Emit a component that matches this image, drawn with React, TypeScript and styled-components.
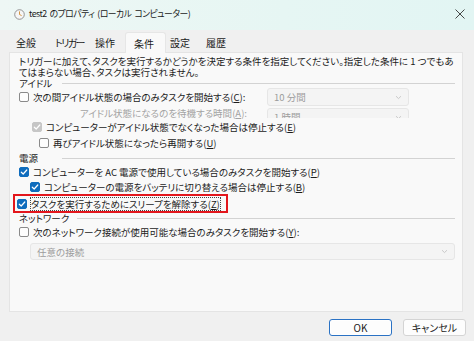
import React from "react";
import styled, { createGlobalStyle } from "styled-components";

const Global = createGlobalStyle`
  html, body { margin: 0; padding: 0; }
  body {
    background: #f0f0f0;
    font-family: "Noto Sans CJK JP", "Noto Sans", sans-serif;
    color: #1b1b1b;
  }
  * { box-sizing: border-box; }
`;

const Window = styled.div`
  width: 474px;
  height: 341px;
  display: flex;
  flex-direction: column;
  background: #f0f0f0;
  overflow: hidden;
  font-feature-settings: "palt";
`;

const TitleBar = styled.div`
  height: 30px;
  flex: none;
  display: flex;
  align-items: center;
  gap: 4px;
  padding: 0 8px 2px 14px;
  background: linear-gradient(90deg, #eef7f5 0%, #e6f6f3 60%, #e2f5f3 100%);
`;

const TitleText = styled.div`
  flex: 1;
  font-size: 8.8px;
  letter-spacing: -0.5px;
  word-spacing: 1.5px;
  line-height: 14px;
  color: #1a1a1a;
  white-space: nowrap;
`;

const CloseBtn = styled.div`
  width: 12px;
  height: 12px;
  display: flex;
  align-items: center;
  justify-content: center;
`;

const TabStrip = styled.div`
  height: 22px;
  flex: none;
  display: flex;
  align-items: flex-end;
  padding-left: 8px;
`;

const Tab = styled.div<{ $active?: boolean; $tight?: boolean }>`
  height: ${(p) => (p.$active ? 21 : 20)}px;
  padding: ${(p) => (p.$active ? "0 11px 0 8px" : p.$tight ? "0 2px 0 10px" : "0 7px")};
  margin: ${(p) => (p.$active ? "0 -4px -1px 2px" : "0")};
  display: flex;
  align-items: center;
  font-size: 10px;
  letter-spacing: ${(p) => (p.$tight ? "-1.6px" : "0")};
  color: #1a1a1a;
  background: ${(p) => (p.$active ? "#f9f9f9" : "transparent")};
  border: 1px solid ${(p) => (p.$active ? "#e6e6e6" : "transparent")};
  border-bottom: none;
  border-radius: 3px 3px 0 0;
  position: relative;
  z-index: ${(p) => (p.$active ? 1 : 0)};
`;

const Panel = styled.div`
  height: 260px;
  flex: none;
  margin: 0 11px 0 9px;
  background: #f9f9f9;
  border: 1px solid #e4e4e4;
  padding: 3px 7px 0 9px;
  display: flex;
  flex-direction: column;
  font-size: 9.5px;
`;

const Intro = styled.div`
  line-height: 11px;
  white-space: nowrap;
`;

const GroupHeading = styled.div<{ $h: number }>`
  height: ${(p) => p.$h}px;
  line-height: ${(p) => p.$h}px;
  display: flex;
  align-items: center;
  gap: 8px;
  white-space: nowrap;
  &::after {
    content: "";
    flex: 1;
    height: 1px;
    background: #d3d3d3;
  }
`;

const HeadingText = styled.span`
  min-width: 35px;
`;

const Row = styled.div<{ $h: number; $indent?: number; $top?: boolean }>`
  height: ${(p) => p.$h}px;
  padding-left: ${(p) => p.$indent ?? 0}px;
  display: flex;
  align-items: ${(p) => (p.$top ? "flex-start" : "center")};
  white-space: nowrap;
`;

const CheckLine = styled.div<{ $w?: number }>`
  display: flex;
  align-items: center;
  gap: 4px;
  width: ${(p) => (p.$w ? `${p.$w}px` : "auto")};
  flex: none;
`;

const Box = styled.span<{ $checked?: boolean; $disabled?: boolean }>`
  width: 10px;
  height: 10px;
  flex: none;
  border-radius: 2px;
  display: inline-flex;
  align-items: center;
  justify-content: center;
  background: ${(p) =>
    p.$checked ? (p.$disabled ? "#c6c6c6" : "#0f6cbd") : "#fdfdfd"};
  border: 1px solid
    ${(p) => (p.$checked ? (p.$disabled ? "#c6c6c6" : "#0f6cbd") : "#8a8a8a")};
`;

const Label = styled.span<{ $disabled?: boolean }>`
  color: ${(p) => (p.$disabled ? "#a3a3a3" : "#1b1b1b")};
  line-height: 12px;
`;

const Focus = styled.span`
  outline: 1px dotted #444;
  line-height: 12px;
`;

const Highlight = styled.div`
  height: 19px;
  margin-left: -6px;
  align-self: flex-start;
  border: 2px solid #e3161c;
  padding: 0 6px 0 2px;
  display: flex;
  align-items: center;
  white-space: nowrap;
`;

const RightLabel = styled.div<{ $w: number }>`
  width: ${(p) => p.$w}px;
  flex: none;
  text-align: right;
  padding-right: 20px;
  line-height: 14px;
  color: #a3a3a3;
`;

const Select = styled.div<{ $w: number; $h: number }>`
  width: ${(p) => p.$w}px;
  height: ${(p) => p.$h}px;
  flex: none;
  background: #f4f4f4;
  border: 1px solid #e6e6e6;
  border-radius: 3px;
  display: flex;
  align-items: center;
  justify-content: space-between;
  padding: 0 6px 0 6px;
  color: #9c9c9c;
  font-size: 9.5px;
`;

const Clip = styled.div<{ $h: number }>`
  height: ${(p) => p.$h}px;
  overflow: hidden;
  margin-top: 2px;
  flex: none;
`;

const SelectWrap = styled.div`
  margin: 4px 0 0 11px;
`;

const Footer = styled.div`
  flex: 1;
  display: flex;
  justify-content: flex-end;
  align-items: flex-start;
  gap: 11px;
  padding: 7px 8px 0 0;
`;

const Button = styled.div<{ $primary?: boolean }>`
  width: 63px;
  height: 17px;
  display: flex;
  align-items: center;
  justify-content: center;
  font-size: 10px;
  color: #1a1a1a;
  background: #fdfdfd;
  border-radius: 3px;
  border: 1px solid ${(p) => (p.$primary ? "#2a72c4" : "#d4d4d4")};
  box-shadow: ${(p) => (p.$primary ? "inset 0 0 0 1px #ffffff" : "none")};
`;

const Check = () => (
  <svg width="8" height="8" viewBox="0 0 8 8">
    <path d="M1.3 4.2 L3.2 6 L6.8 2" fill="none" stroke="#fff" strokeWidth="1.2" strokeLinecap="round" strokeLinejoin="round" />
  </svg>
);

const Chevron = () => (
  <svg width="7" height="5" viewBox="0 0 7 5">
    <path d="M1 1.2 L3.5 3.6 L6 1.2" fill="none" stroke="#c4c4c4" strokeWidth="0.9" />
  </svg>
);

const CheckBox: React.FC<{ checked?: boolean; disabled?: boolean }> = ({ checked, disabled }) => (
  <Box $checked={checked} $disabled={disabled}>
    {checked ? <Check /> : null}
  </Box>
);

const Key: React.FC<{ k: string; colon?: boolean }> = ({ k, colon }) => (
  <>
    (<u>{k}</u>){colon ? ":" : ""}
  </>
);

const ClockIcon = () => (
  <svg width="11" height="11" viewBox="0 0 11 11">
    <circle cx="5.5" cy="5.5" r="4.8" fill="#f6f6f6" stroke="#8a8a8a" strokeWidth="0.9" />
    <path d="M5.5 2.4 V5.5 L7.6 6.6" fill="none" stroke="#d08a2c" strokeWidth="0.9" />
  </svg>
);

const CloseIcon = () => (
  <svg width="10" height="10" viewBox="0 0 10 10">
    <path d="M0.5 0.5 L9.5 9.5 M9.5 0.5 L0.5 9.5" stroke="#333" strokeWidth="0.9" />
  </svg>
);

export default function App() {
  return (
    <>
      <Global />
      <Window>
        <TitleBar>
          <ClockIcon />
          <TitleText>test2 のプロパティ (ローカル コンピューター)</TitleText>
          <CloseBtn>
            <CloseIcon />
          </CloseBtn>
        </TitleBar>
        <TabStrip>
          <Tab>全般</Tab>
          <Tab $tight>トリガー</Tab>
          <Tab>操作</Tab>
          <Tab $active>条件</Tab>
          <Tab>設定</Tab>
          <Tab>履歴</Tab>
        </TabStrip>
        <Panel>
          <Intro>
            トリガーに加えて、タスクを実行するかどうかを決定する条件を指定してください。指定した条件に 1 つでもあ
            <br />
            てはまらない場合、タスクは実行されません。
          </Intro>
          <GroupHeading $h={10}>
            <HeadingText>アイドル</HeadingText>
          </GroupHeading>
          <Row $h={18}>
            <CheckLine $w={248}>
              <CheckBox />
              <Label>
                次の間アイドル状態の場合のみタスクを開始する<Key k="C" colon />
              </Label>
            </CheckLine>
            <Select $w={142} $h={18}>
              <span>10 分間</span>
              <Chevron />
            </Select>
          </Row>
          <Row $h={14} $top>
            <RightLabel $w={248}>
              アイドル状態になるのを待機する時間<Key k="A" colon />
            </RightLabel>
            <Clip $h={10}>
              <Select $w={142} $h={18}>
                <span>1 時間</span>
                <Chevron />
              </Select>
            </Clip>
          </Row>
          <Row $h={14} $indent={13}>
            <CheckLine>
              <CheckBox checked disabled />
              <Label>
                コンピューターがアイドル状態でなくなった場合は停止する<Key k="E" />
              </Label>
            </CheckLine>
          </Row>
          <Row $h={18} $indent={20}>
            <CheckLine>
              <CheckBox />
              <Label>
                再びアイドル状態になったら再開する<Key k="U" />
              </Label>
            </CheckLine>
          </Row>
          <GroupHeading $h={12}>
            <HeadingText>電源</HeadingText>
          </GroupHeading>
          <Row $h={16}>
            <CheckLine>
              <CheckBox checked />
              <Label>
                コンピューターを AC 電源で使用している場合のみタスクを開始する<Key k="P" />
              </Label>
            </CheckLine>
          </Row>
          <Row $h={14} $indent={11}>
            <CheckLine>
              <CheckBox checked />
              <Label>
                コンピューターの電源をバッテリに切り替える場合は停止する<Key k="B" />
              </Label>
            </CheckLine>
          </Row>
          <Highlight>
            <CheckLine>
              <CheckBox checked />
              <Focus>
                タスクを実行するためにスリープを解除する<Key k="Z" />
              </Focus>
            </CheckLine>
          </Highlight>
          <GroupHeading $h={11}>
            <HeadingText>ネットワーク</HeadingText>
          </GroupHeading>
          <Row $h={15}>
            <CheckLine>
              <CheckBox />
              <Label>
                次のネットワーク接続が使用可能な場合のみタスクを開始する<Key k="Y" colon />
              </Label>
            </CheckLine>
          </Row>
          <SelectWrap>
            <Select $w={425} $h={17}>
              <span>任意の接続</span>
              <Chevron />
            </Select>
          </SelectWrap>
        </Panel>
        <Footer>
          <Button $primary>OK</Button>
          <Button>キャンセル</Button>
        </Footer>
      </Window>
    </>
  );
}
